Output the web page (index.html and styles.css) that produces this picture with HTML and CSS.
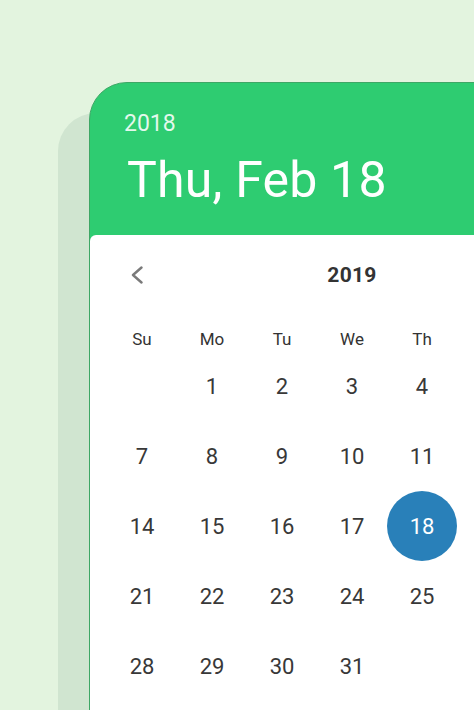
FILE: index.html
```html
<!DOCTYPE html>
<html>
<head>
<meta charset="utf-8">
<link rel="stylesheet" href="styles.css">
</head>
<body>
<div class="stage">
  <div class="card">
    <div class="header">
      <div class="year">2018</div>
      <div class="date">Thu, Feb 18</div>
    </div>
    <div class="body">
      <div class="nav">
        <svg class="chev" width="14" height="18" viewBox="0 0 14 18"><path d="M11.5 1.5 L3 9 L11.5 16.5" fill="none" stroke="#7a7a7a" stroke-width="2.4" stroke-linecap="round" stroke-linejoin="round"/></svg>
        <div class="navyear">2019</div>
        <span></span>
      </div>
      <div class="grid">
        <div class="wd">Su</div><div class="wd">Mo</div><div class="wd">Tu</div><div class="wd">We</div><div class="wd">Th</div>
        <div class="d"></div><div class="d">1</div><div class="d">2</div><div class="d">3</div><div class="d">4</div>
        <div class="d">7</div><div class="d">8</div><div class="d">9</div><div class="d">10</div><div class="d">11</div>
        <div class="d">14</div><div class="d">15</div><div class="d">16</div><div class="d">17</div><div class="d sel"><span>18</span></div>
        <div class="d">21</div><div class="d">22</div><div class="d">23</div><div class="d">24</div><div class="d">25</div>
        <div class="d">28</div><div class="d">29</div><div class="d">30</div><div class="d">31</div><div class="d"></div>
      </div>
    </div>
  </div>
</div>
</body>
</html>
```
FILE: styles.css
```css
html, body {
  margin: 0;
  padding: 0;
  height: 100%;
  overflow: hidden;
  background: #e3f4df;
  font-family: Roboto, "Liberation Sans", sans-serif;
}
.stage {
  padding: 82px 0 0 89px;
  width: 560px;
}
.card {
  width: 540px;
  height: 760px;
  background: #2ecc71;
  border: 1px solid #3ea765;
  border-top-left-radius: 38px;
  box-shadow: -31px 31px 0 #d0e5d0;
  display: flex;
  flex-direction: column;
  box-sizing: border-box;
}
.header {
  height: 152px;
  padding: 28px 0 0 34px;
  box-sizing: border-box;
  color: #fff;
}
.year {
  font-size: 23px;
  line-height: 26px;
  color: rgba(255,255,255,0.88);
}
.date {
  font-size: 50px;
  line-height: 56px;
  margin-top: 15px;
  margin-left: 3px;
  letter-spacing: 0.2px;
}
.body {
  flex: 1;
  background: #fff;
  border-top-left-radius: 6px;
  padding: 0 0 0 17px;
}
.nav {
  width: 490px;
  height: 80px;
  display: grid;
  grid-template-columns: 1fr auto 1fr;
  align-items: center;
}
.chev {
  margin-left: 23px;
}
.navyear {
  font-size: 21px;
  font-weight: 700;
  color: #333;
  letter-spacing: 0.3px;
}
.grid {
  margin-top: 13px;
  width: 350px;
  display: grid;
  grid-template-columns: repeat(5, 70px);
  grid-template-rows: 23px repeat(5, 70px);
}
.wd {
  font-size: 17px;
  line-height: 23px;
  text-align: center;
  color: #333;
}
.d {
  display: flex;
  align-items: center;
  justify-content: center;
  font-size: 22px;
  color: #383838;
}
.sel span {
  width: 70px;
  height: 70px;
  border-radius: 50%;
  background: #2980b9;
  color: #fff;
  display: flex;
  align-items: center;
  justify-content: center;
}
```
